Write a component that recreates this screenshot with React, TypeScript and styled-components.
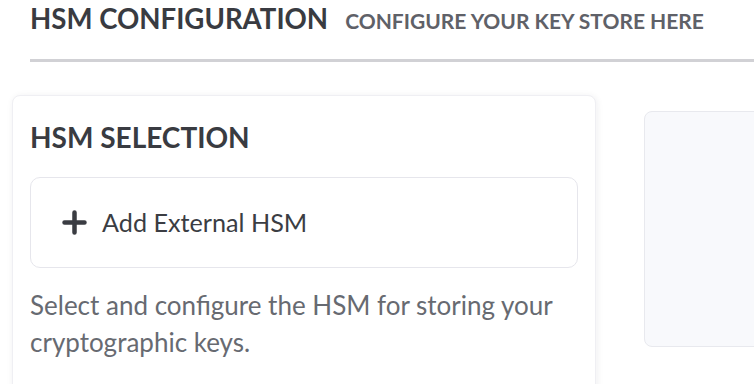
import React from "react";
import styled, { createGlobalStyle } from "styled-components";

const GlobalStyle = createGlobalStyle`
	html, body {
		margin: 0;
		padding: 0;
		background: #ffffff;
		overflow: hidden;
	}
	body {
		font-family: Lato, "Noto Sans", "Liberation Sans", sans-serif;
		-webkit-font-smoothing: antialiased;
	}
`;

// 페이지 전체
const Page = styled.div`
	width: 100vw;
	padding: 0 0 0 12px;
	box-sizing: border-box;
`;

// 상단 제목 영역
const Header = styled.header`
	display: flex;
	align-items: baseline;
	gap: 17px;
	padding: 2px 0 0 18px;
`;

const Title = styled.h1`
	margin: 0;
	font-size: 27.6px;
	line-height: 1.2;
	font-weight: 700;
	color: #393b41;
	white-space: nowrap;
`;

const Subtitle = styled.span`
	font-size: 21px;
	font-weight: 700;
	color: #5f6168;
	white-space: nowrap;
`;

const Rule = styled.hr`
	margin: 24px 0 0 18px;
	height: 3px;
	border: none;
	background: #d1d1d5;
`;

// 카드 + 우측 패널
const Row = styled.div`
	display: grid;
	grid-template-columns: 584px 1fr;
	gap: 48px;
	align-items: start;
	margin-top: 33px;
`;

const Card = styled.section`
	box-sizing: border-box;
	min-height: 320px;
	padding: 25px 17px 20px 17px;
	background: #ffffff;
	border: 1px solid #efeff3;
	border-radius: 8px;
	box-shadow: 1px 1px 7px rgba(30, 30, 60, 0.07);
`;

const CardTitle = styled.h2`
	margin: 0;
	font-size: 28px;
	line-height: 1.2;
	font-weight: 700;
	color: #393b41;
`;

// 외부 HSM 추가 버튼
const AddButton = styled.button`
	display: flex;
	align-items: center;
	gap: 15px;
	width: 100%;
	height: 91px;
	margin-top: 22px;
	padding: 0 0 0 31px;
	box-sizing: border-box;
	background: #ffffff;
	border: 1.5px solid #e6e6ec;
	border-radius: 10px;
	font-family: inherit;
	font-size: 25.2px;
	color: #3b3d43;
	cursor: pointer;
	text-align: left;
`;

const Description = styled.p`
	margin: 19px 0 0;
	font-size: 26px;
	line-height: 37px;
	color: #676a71;
`;

const SidePanel = styled.div`
	height: 234px;
	margin-top: 16px;
	margin-right: -20px;
	background: #f8f9fc;
	border: 1.5px solid #e8e9ee;
	border-radius: 8px;
`;

const PlusIcon = () => (
	<svg width="25" height="25" viewBox="0 0 25 25" aria-hidden="true">
		<path
			d="M12.5 2.5v20M2.5 12.5h20"
			stroke="#3a3c42"
			strokeWidth="4.5"
			strokeLinecap="round"
			fill="none"
		/>
	</svg>
);

const App = () => {
	return (
		<>
			<GlobalStyle />
			<Page>
				<Header>
					<Title>HSM CONFIGURATION</Title>
					<Subtitle>CONFIGURE YOUR KEY STORE HERE</Subtitle>
				</Header>
				<Rule />
				<Row>
					<Card>
						<CardTitle>HSM SELECTION</CardTitle>
						<AddButton>
							<PlusIcon />
							Add External HSM
						</AddButton>
						<Description>
							Select and configure the HSM for storing your cryptographic keys.
						</Description>
					</Card>
					<SidePanel />
				</Row>
			</Page>
		</>
	);
};

export default App;
